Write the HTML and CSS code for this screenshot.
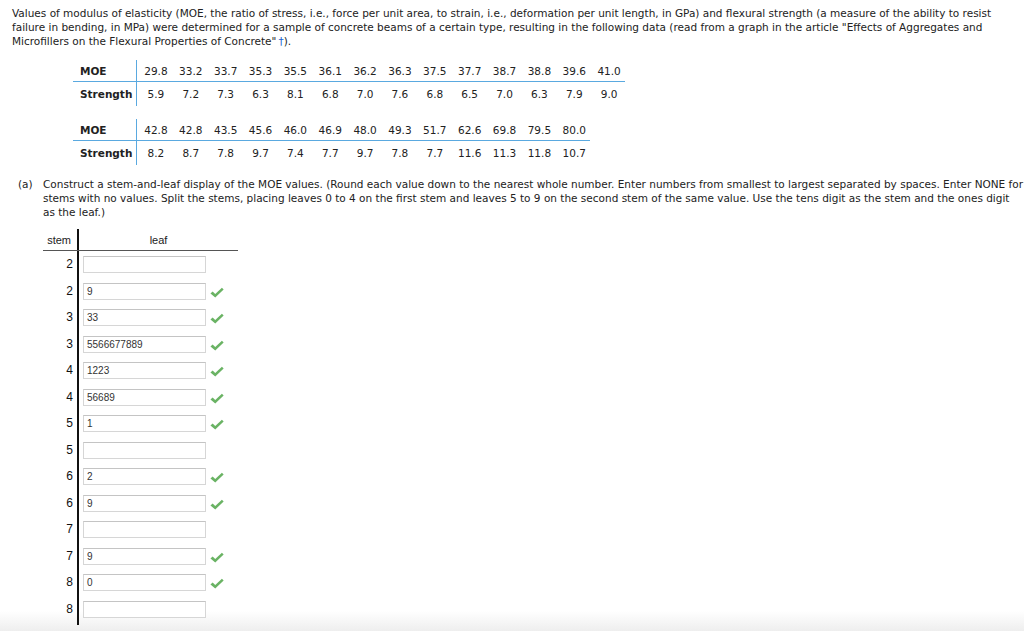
FILE: index.html
```html
<!DOCTYPE html>
<html>
<head>
<meta charset="utf-8">
<link rel="stylesheet" href="styles.css">
</head>
<body>
<div class="page">
  <p class="intro">Values of modulus of elasticity (MOE, the ratio of stress, i.e., force per unit area, to strain, i.e., deformation per unit length, in GPa) and flexural strength (a measure of the ability to resist failure in bending, in MPa) were determined for a sample of concrete beams of a certain type, resulting in the following data (read from a graph in the article "Effects of Aggregates and Microfillers on the Flexural Properties of Concrete"<span class="dagger">&dagger;</span>).</p>

  <div class="data">
    <div class="drow top">
      <div class="lab">MOE</div>
      <div class="v">29.8</div><div class="v">33.2</div><div class="v">33.7</div><div class="v">35.3</div><div class="v">35.5</div><div class="v">36.1</div><div class="v">36.2</div><div class="v">36.3</div><div class="v">37.5</div><div class="v">37.7</div><div class="v">38.7</div><div class="v">38.8</div><div class="v">39.6</div><div class="v">41.0</div>
    </div>
    <div class="drow bot">
      <div class="lab">Strength</div>
      <div class="v">5.9</div><div class="v">7.2</div><div class="v">7.3</div><div class="v">6.3</div><div class="v">8.1</div><div class="v">6.8</div><div class="v">7.0</div><div class="v">7.6</div><div class="v">6.8</div><div class="v">6.5</div><div class="v">7.0</div><div class="v">6.3</div><div class="v">7.9</div><div class="v">9.0</div>
    </div>
  </div>

  <div class="data second">
    <div class="drow top">
      <div class="lab">MOE</div>
      <div class="v">42.8</div><div class="v">42.8</div><div class="v">43.5</div><div class="v">45.6</div><div class="v">46.0</div><div class="v">46.9</div><div class="v">48.0</div><div class="v">49.3</div><div class="v">51.7</div><div class="v">62.6</div><div class="v">69.8</div><div class="v">79.5</div><div class="v">80.0</div>
    </div>
    <div class="drow bot">
      <div class="lab">Strength</div>
      <div class="v">8.2</div><div class="v">8.7</div><div class="v">7.8</div><div class="v">9.7</div><div class="v">7.4</div><div class="v">7.7</div><div class="v">9.7</div><div class="v">7.8</div><div class="v">7.7</div><div class="v">11.6</div><div class="v">11.3</div><div class="v">11.8</div><div class="v">10.7</div>
    </div>
  </div>

  <div class="part">
    <div class="plabel">(a)</div>
    <div class="ptext">Construct a stem-and-leaf display of the MOE values. (Round each value down to the nearest whole number. Enter numbers from smallest to largest separated by spaces. Enter NONE for stems with no values. Split the stems, placing leaves 0 to 4 on the first stem and leaves 5 to 9 on the second stem of the same value. Use the tens digit as the stem and the ones digit as&nbsp;the leaf.)</div>
  </div>

  <div class="sl">
    <div class="sl-head">
      <div class="stem-h">stem</div>
      <div class="leaf-h">leaf</div>
    </div>
    <div class="sl-body">
      <div class="srow"><div class="stem">2</div><div class="leaf"><div class="box"></div></div></div>
      <div class="srow"><div class="stem">2</div><div class="leaf"><div class="box">9</div><svg class="chk" viewBox="0 0 16 12"><path d="M0.5 7 L3 4.8 L6 7.6 L13.6 0.6 L15.6 2.6 L6 11.6 Z"/></svg></div></div>
      <div class="srow"><div class="stem">3</div><div class="leaf"><div class="box">33</div><svg class="chk" viewBox="0 0 16 12"><path d="M0.5 7 L3 4.8 L6 7.6 L13.6 0.6 L15.6 2.6 L6 11.6 Z"/></svg></div></div>
      <div class="srow"><div class="stem">3</div><div class="leaf"><div class="box">5566677889</div><svg class="chk" viewBox="0 0 16 12"><path d="M0.5 7 L3 4.8 L6 7.6 L13.6 0.6 L15.6 2.6 L6 11.6 Z"/></svg></div></div>
      <div class="srow"><div class="stem">4</div><div class="leaf"><div class="box">1223</div><svg class="chk" viewBox="0 0 16 12"><path d="M0.5 7 L3 4.8 L6 7.6 L13.6 0.6 L15.6 2.6 L6 11.6 Z"/></svg></div></div>
      <div class="srow"><div class="stem">4</div><div class="leaf"><div class="box">56689</div><svg class="chk" viewBox="0 0 16 12"><path d="M0.5 7 L3 4.8 L6 7.6 L13.6 0.6 L15.6 2.6 L6 11.6 Z"/></svg></div></div>
      <div class="srow"><div class="stem">5</div><div class="leaf"><div class="box">1</div><svg class="chk" viewBox="0 0 16 12"><path d="M0.5 7 L3 4.8 L6 7.6 L13.6 0.6 L15.6 2.6 L6 11.6 Z"/></svg></div></div>
      <div class="srow"><div class="stem">5</div><div class="leaf"><div class="box"></div></div></div>
      <div class="srow"><div class="stem">6</div><div class="leaf"><div class="box">2</div><svg class="chk" viewBox="0 0 16 12"><path d="M0.5 7 L3 4.8 L6 7.6 L13.6 0.6 L15.6 2.6 L6 11.6 Z"/></svg></div></div>
      <div class="srow"><div class="stem">6</div><div class="leaf"><div class="box">9</div><svg class="chk" viewBox="0 0 16 12"><path d="M0.5 7 L3 4.8 L6 7.6 L13.6 0.6 L15.6 2.6 L6 11.6 Z"/></svg></div></div>
      <div class="srow"><div class="stem">7</div><div class="leaf"><div class="box"></div></div></div>
      <div class="srow"><div class="stem">7</div><div class="leaf"><div class="box">9</div><svg class="chk" viewBox="0 0 16 12"><path d="M0.5 7 L3 4.8 L6 7.6 L13.6 0.6 L15.6 2.6 L6 11.6 Z"/></svg></div></div>
      <div class="srow"><div class="stem">8</div><div class="leaf"><div class="box">0</div><svg class="chk" viewBox="0 0 16 12"><path d="M0.5 7 L3 4.8 L6 7.6 L13.6 0.6 L15.6 2.6 L6 11.6 Z"/></svg></div></div>
      <div class="srow"><div class="stem">8</div><div class="leaf"><div class="box"></div></div></div>
    </div>
  </div>
</div>
</body>
</html>
```
FILE: styles.css
```css
html, body {
  margin: 0;
  padding: 0;
}
body {
  font-family: "DejaVu Sans", Verdana, sans-serif;
  font-size: 10.5px;
  color: #222;
  background: #fff;
}
.page {
  min-height: 631px;
  box-sizing: border-box;
  padding: 6px 0 0 12px;
  background: linear-gradient(to bottom, #fff 0, #fff calc(100% - 20px), #eeeeee 100%);
  overflow: hidden;
}
.intro {
  margin: 0;
  line-height: 14px;
  width: 1000px;
}
.dagger {
  color: #1a5fd0;
  margin-left: 2px;
}
.data {
  margin: 12px 0 0 61px;
  display: flex;
  flex-direction: column;
  align-items: flex-start;
}
.data.second {
  margin-top: 13px;
}
.drow {
  display: flex;
  line-height: 14px;
}
.drow.top {
  border-bottom: 1px solid #5aa9e0;
}
.drow.top .lab,
.drow.top .v {
  padding-top: 4px;
  padding-bottom: 3px;
}
.drow.bot .lab,
.drow.bot .v {
  padding-top: 5px;
  padding-bottom: 5px;
}
.lab {
  width: 64px;
  box-sizing: border-box;
  padding-left: 7px;
  font-weight: bold;
  border-right: 1px solid #5aa9e0;
  white-space: nowrap;
}
.v {
  width: 34.86px;
  text-align: center;
  box-sizing: border-box;
  padding-left: 3px;
}
.part {
  display: flex;
  margin-top: 12px;
  padding-left: 6px;
  line-height: 14px;
}
.plabel {
  width: 25px;
  flex: none;
}
.ptext {
  width: 983px;
  flex: none;
}
.sl {
  margin: 10px 0 0 31px;
  font-family: "Liberation Sans", Arial, sans-serif;
  width: 195px;
}
.sl-head {
  display: flex;
  border-bottom: 1px solid #555;
  font-size: 11px;
  line-height: 14px;
}
.stem-h {
  width: 36px;
  box-sizing: border-box;
  padding: 4px 6px 3px 0;
  text-align: right;
  border-right: 2px solid #111;
}
.leaf-h {
  flex: 1;
  padding: 4px 0 3px;
  text-align: center;
}
.sl-body {
  padding-bottom: 3px;
  border-left: 2px solid #111;
  margin-left: 34px;
}
.srow {
  display: flex;
  height: 26.5px;
}
.stem {
  width: 36px;
  margin-left: -36px;
  box-sizing: border-box;
  padding-right: 6px;
  text-align: right;
  font-size: 12px;
  line-height: 17px;
  padding-top: 5px;
  color: #111;
}
.leaf {
  display: flex;
  align-items: flex-start;
  padding: 5px 0 0 4px;
}
.box {
  width: 123px;
  height: 17px;
  box-sizing: border-box;
  border: 1px solid #d6d6d6;
  border-top-color: #c4c4c4;
  font-size: 10px;
  line-height: 15px;
  padding-left: 3px;
  color: #333;
  background: #fff;
}
.chk {
  width: 14px;
  height: 11px;
  margin: 4px 0 0 4px;
  fill: #6ab364;
}
```
